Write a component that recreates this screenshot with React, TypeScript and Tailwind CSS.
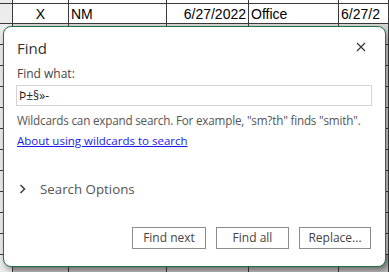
import React from "react";

const cols = [13, 56, 98, 82, 90, 50];

const Row = ({ h, cells, className = "" }: { h: number; cells?: string[]; className?: string }) => (
  <div className={`flex border-b border-[#3a3a3a] ${className}`} style={{ height: h }}>
    {cols.map((w, i) => (
      <div
        key={i}
        className={`shrink-0 border-r border-[#3a3a3a] flex items-center text-[14px] leading-none text-black overflow-hidden whitespace-nowrap ${
          i === 0 ? "bg-[#ececec]" : ""
        } ${i === 1 ? "justify-center" : i === 3 ? "justify-end pr-[2px]" : "pl-[2px]"}`}
        style={{ width: w }}
      >
        {cells?.[i] ?? ""}
      </div>
    ))}
  </div>
);

const Sheet = () => (
  <div className="flex flex-col font-['Liberation_Sans',Arial,sans-serif]">
    <Row h={4} />
    <Row h={20} cells={["", "X", "NM", "6/27/2022", "Office", "6/27/2"]} />
    {Array.from({ length: 11 }).map((_, i) => (
      <Row key={i} h={21} className="bg-[#d9d9d9]" />
    ))}
    <Row h={21} className="bg-gradient-to-b from-[#9a9a9a] to-[#c4c4c4]" />
  </div>
);

const Btn = ({ label, w }: { label: string; w: number }) => (
  <button
    className="h-[22px] border border-[#8c8c8c] bg-white text-[12px] text-[#444] leading-none flex items-center justify-center"
    style={{ width: w }}
  >
    {label}
  </button>
);

export default function App() {
  return (
    <div className="relative w-[389px] h-[272px] overflow-hidden bg-white">
      <Sheet />
      <div className="absolute left-[3px] top-[26px] w-[383px] h-[241px] rounded-[8px] border border-[#217346] bg-white shadow-[2px_3px_6px_rgba(0,0,0,0.4)] font-['Open_Sans','Noto_Sans',sans-serif] flex flex-col">
        <div className="flex items-center justify-between pt-[11px] pl-[13px] pr-[19px]">
          <span className="text-[15px] leading-[20px] text-[#333]">Find</span>
          <svg width="10" height="10" viewBox="0 0 10 10" className="mt-[-3px]">
            <path d="M1 1 L9 9 M9 1 L1 9" stroke="#333" strokeWidth="1.1" fill="none" />
          </svg>
        </div>
        <div className="mt-[8px] pl-[13px] text-[12px] leading-[16px] text-[#444]">Find what:</div>
        <div className="mt-[3px] ml-[12px] mr-[13px] h-[21px] border border-[#d4d4d4] flex items-center pl-[2px] text-[12px] text-[#222]">
          Þ±§»-
        </div>
        <div className="mt-[6px] pl-[13px] text-[11.7px] leading-[16px] text-[#555] whitespace-nowrap tracking-[-0.2px]">
          Wildcards can expand search. For example, "sm?th" finds "smith".
        </div>
        <div className="mt-[5px] pl-[13px] text-[11.5px] leading-[16px]">
          <span className="text-[#1a1aee] underline">About using wildcards to search</span>
        </div>
        <div className="mt-[30px] pl-[15px] flex items-center h-[20px] gap-[14px]">
          <svg width="7" height="10" viewBox="0 0 7 10">
            <path d="M1.5 1 L5.5 5 L1.5 9" stroke="#444" strokeWidth="1.6" fill="none" />
          </svg>
          <span className="text-[13.3px] leading-[20px] text-[#555]">Search Options</span>
        </div>
        <div className="mt-[28px] pr-[14px] flex justify-end gap-[10px]">
          <Btn label="Find next" w={74} />
          <Btn label="Find all" w={73} />
          <Btn label="Replace..." w={72} />
        </div>
      </div>
    </div>
  );
}
